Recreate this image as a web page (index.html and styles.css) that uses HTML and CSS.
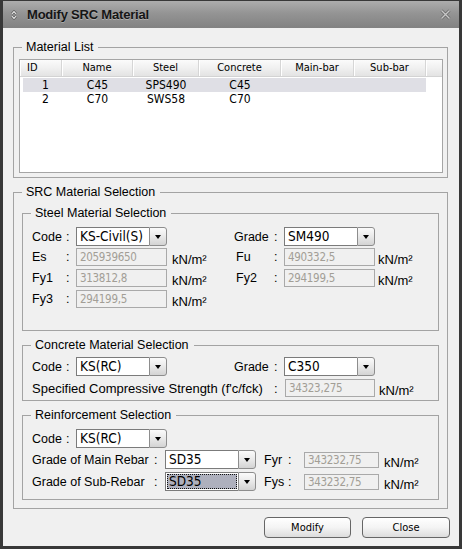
FILE: index.html
```html
<!DOCTYPE html>
<html lang="en">
<head>
    <meta charset="UTF-8">
    <title>Modify SRC Material</title>
    <link rel="stylesheet" href="styles.css">
</head>
<body>
<div class="dialog">
    <div class="titlebar">
        <svg class="titlebar__icon" width="6" height="10" viewBox="0 0 6 10">
            <path class="shade" d="M0.8 4 L3 1.6 L5.2 4 M0.8 6 L3 8.4 L5.2 6"/>
            <path class="glyph" d="M0.8 4 L3 1.6 L5.2 4 M0.8 6 L3 8.4 L5.2 6"/>
        </svg>
        <span class="titlebar__text">Modify SRC Material</span>
        <svg class="titlebar__close" width="11" height="11" viewBox="0 0 11 11">
            <path class="shade" d="M1.5 1.5 L9.5 9.5 M9.5 1.5 L1.5 9.5"/>
            <path class="glyph" d="M1.5 1.5 L9.5 9.5 M9.5 1.5 L1.5 9.5"/>
        </svg>
    </div>

    <div class="client">
        <!-- material list -->
        <fieldset class="group group--list">
            <legend>Material List</legend>
            <div class="listview">
                <div class="listview__head">
                    <span class="col col--id">ID</span>
                    <span class="col col--name">Name</span>
                    <span class="col col--steel">Steel</span>
                    <span class="col col--conc">Concrete</span>
                    <span class="col col--main">Main-bar</span>
                    <span class="col col--sub">Sub-bar</span>
                    <span class="col col--rest"></span>
                </div>
                <div class="listview__rows">
                    <div class="listview__row is-selected">
                        <span class="col col--id">1</span>
                        <span class="col col--name">C45</span>
                        <span class="col col--steel">SPS490</span>
                        <span class="col col--conc">C45</span>
                        <span class="col col--main"></span>
                        <span class="col col--sub"></span>
                    </div>
                    <div class="listview__row">
                        <span class="col col--id">2</span>
                        <span class="col col--name">C70</span>
                        <span class="col col--steel">SWS58</span>
                        <span class="col col--conc">C70</span>
                        <span class="col col--main"></span>
                        <span class="col col--sub"></span>
                    </div>
                </div>
            </div>
        </fieldset>

        <!-- SRC selection -->
        <fieldset class="group group--src">
            <legend>SRC Material Selection</legend>

            <fieldset class="group group--sub group--steel">
                <legend>Steel Material Selection</legend>
                <div class="frow">
                    <span class="lbl lbl--a"><span class="lbl__name">Code</span>:</span>
                    <span class="combo"><span class="combo__field">KS-Civil(S)</span><span class="combo__btn"></span></span>
                    <span class="spacer-a"></span>
                    <span class="lbl lbl--b"><span class="lbl__name">Grade</span>:</span>
                    <span class="combo"><span class="combo__field">SM490</span><span class="combo__btn"></span></span>
                </div>
                <div class="frow frow--tight">
                    <span class="lbl lbl--a"><span class="lbl__name">Es</span>:</span>
                    <span class="edit">205939650</span>
                    <span class="unit unit--a">kN/m²</span>
                    <span class="lbl lbl--b"><span class="lbl__name lbl__name--in">Fu</span>:</span>
                    <span class="edit">490332,5</span>
                    <span class="unit unit--b">kN/m²</span>
                </div>
                <div class="frow">
                    <span class="lbl lbl--a"><span class="lbl__name">Fy1</span>:</span>
                    <span class="edit">313812,8</span>
                    <span class="unit unit--a">kN/m²</span>
                    <span class="lbl lbl--b"><span class="lbl__name lbl__name--in">Fy2</span>:</span>
                    <span class="edit">294199,5</span>
                    <span class="unit unit--b">kN/m²</span>
                </div>
                <div class="frow">
                    <span class="lbl lbl--a"><span class="lbl__name">Fy3</span>:</span>
                    <span class="edit">294199,5</span>
                    <span class="unit unit--a">kN/m²</span>
                </div>
            </fieldset>

            <fieldset class="group group--sub group--concrete">
                <legend>Concrete Material Selection</legend>
                <div class="frow">
                    <span class="lbl lbl--a"><span class="lbl__name">Code</span>:</span>
                    <span class="combo"><span class="combo__field">KS(RC)</span><span class="combo__btn"></span></span>
                    <span class="spacer-a"></span>
                    <span class="lbl lbl--b"><span class="lbl__name">Grade</span>:</span>
                    <span class="combo"><span class="combo__field">C350</span><span class="combo__btn"></span></span>
                </div>
                <div class="frow">
                    <span class="lbl lbl--spec"><span class="lbl__name">Specified Compressive Strength (f'c/fck)</span>:</span>
                    <span class="edit edit--spec">34323,275</span>
                    <span class="unit unit--c">kN/m²</span>
                </div>
            </fieldset>

            <fieldset class="group group--sub group--rebar">
                <legend>Reinforcement Selection</legend>
                <div class="frow">
                    <span class="lbl lbl--a"><span class="lbl__name">Code</span>:</span>
                    <span class="combo"><span class="combo__field">KS(RC)</span><span class="combo__btn"></span></span>
                </div>
                <div class="frow frow--tight">
                    <span class="lbl lbl--rebar"><span class="lbl__name">Grade of Main Rebar</span>:</span>
                    <span class="combo"><span class="combo__field">SD35</span><span class="combo__btn"></span></span>
                    <span class="lbl lbl--f"><span class="lbl__name">Fyr</span>:</span>
                    <span class="edit edit--sm">343232,75</span>
                    <span class="unit unit--d">kN/m²</span>
                </div>
                <div class="frow">
                    <span class="lbl lbl--rebar"><span class="lbl__name">Grade of Sub-Rebar</span>:</span>
                    <span class="combo"><span class="combo__field combo__field--focus"><span class="sel">SD35</span></span><span class="combo__btn"></span></span>
                    <span class="lbl lbl--f"><span class="lbl__name">Fys</span>:</span>
                    <span class="edit edit--sm">343232,75</span>
                    <span class="unit unit--d">kN/m²</span>
                </div>
            </fieldset>
        </fieldset>

        <div class="actions">
            <button class="btn">Modify</button>
            <button class="btn btn--close">Close</button>
        </div>
    </div>
</div>
</body>
</html>
```

FILE: styles.css
```css
*, *::before, *::after { box-sizing: border-box; }

html, body { margin: 0; padding: 0; }
body {
  width: 462px;
  height: 549px;
  overflow: hidden;
  background: #f0f0f0;
  font-family: "Liberation Sans", Arial, sans-serif;
  font-size: 12.5px;
  color: #000;
}

.dialog {
  width: 462px;
  height: 549px;
  border: 3px solid #383838;
  border-top-width: 1px;
  background: #f0f0f0;
}

/* title bar */
.titlebar {
  height: 27px;
  display: flex;
  align-items: center;
  padding: 0 10px 0 8px;
  background: linear-gradient(#adadad, #949494 45%, #828282);
}
.titlebar__icon { flex: none; margin-right: 10px; }
.titlebar__text {
  flex: 1;
  font-size: 13px;
  font-weight: bold;
  letter-spacing: -0.2px;
  color: #151515;
  text-shadow: 0 1px 0 rgba(255,255,255,0.3);
}
.titlebar__close { flex: none; margin-right: -2px; }
.titlebar svg path { fill: none; }
.titlebar__icon .shade { stroke: #5a5a5a; stroke-width: 2.4; }
.titlebar__icon .glyph { stroke: #f2f2f2; stroke-width: 1.1; }
.titlebar__close .shade { stroke: #656565; stroke-width: 2.8; }
.titlebar__close .glyph { stroke: #c8c8c8; stroke-width: 1.4; }

.client { padding: 12px 11px 0 10px; }

/* group boxes */
.group {
  margin: 0;
  min-width: 0;
  padding: 5px 4px 4px 5px;
  border: 1px solid #a3a3a3;
}
.group > legend {
  margin-left: 3px;
  padding: 0 5px 0 4px;
  font-size: 12.5px;
  line-height: 14px;
}
.group--src { margin-top: 7px; padding: 7px 8px 8px 8px; }
.group--src > legend { margin-left: 0; }
.group--sub > legend { margin-left: -1px; }
.group--steel { padding: 7px 9px 22px 9px; }
.group--concrete { margin-top: 7px; padding: 5px 9px 3px 9px; }
.group--rebar { margin-top: 7px; padding: 7px 9px 8px 9px; }

/* list view */
.listview {
  height: 114px;
  border: 1px solid #a5a5a5;
  background: #fff;
  font-family: "DejaVu Sans Condensed", "Liberation Sans", sans-serif;
}
.listview__head {
  display: flex;
  height: 17px;
  font-size: 11px;
  line-height: 16px;
  background: linear-gradient(#fbfbfb, #f0f0f0 50%, #e3e3e3);
  border-bottom: 1px solid #d3d3d3;
}
.col { flex: none; text-align: center; white-space: nowrap; }
.listview__head .col {
  border-right: 1px solid #d6d6d6;
  box-shadow: inset 1px 0 0 #fff;
}
.listview__head .col--id { text-align: left; padding-left: 7px; }
.col--id { width: 42px; }
.col--name { width: 71px; }
.col--steel { width: 66px; }
.col--conc { width: 82px; }
.col--main { width: 73px; }
.col--sub { width: 72px; }
.listview__head .col--rest { flex: 1; border-right: 0; }

.listview__rows { padding-top: 1px; }
.listview__row {
  display: flex;
  width: 403px;
  height: 14px;
  margin-left: 3px;
  font-size: 12px;
  line-height: 14px;
}
.listview__row .col--id { width: 39px; padding-left: 6px; }
.listview__row.is-selected { background: #dfdfe5; }

/* form rows */
.frow { display: flex; align-items: center; }
.frow + .frow { margin-top: 3px; }
.frow.frow--tight { margin-top: 2px; }

.lbl { flex: none; display: flex; white-space: nowrap; }
.lbl__name { flex: none; }
.lbl--a { width: 44px; }
.lbl--a .lbl__name { width: 34px; }
.lbl--b { width: 50px; }
.lbl--b .lbl__name { width: 40px; }
.lbl__name--in { padding-left: 2px; }
.lbl--spec { width: 253px; font-size: 13px; }
.lbl--spec .lbl__name { width: 242px; }
.lbl--rebar { width: 133px; }
.lbl--rebar .lbl__name { width: 122px; }
.lbl--f { width: 40px; margin-left: 8px; }
.lbl--f .lbl__name { width: 24px; }

.spacer-a { flex: none; width: 67px; }

.unit { flex: none; align-self: flex-end; font-size: 13px; line-height: 13px; }
.unit--a { width: 62px; margin-left: 5px; }
.unit--b { margin-left: 3px; }
.unit--c { margin-left: 4px; }
.unit--d { margin-left: 5px; }

/* combo box */
.combo { flex: none; display: flex; width: 91px; height: 19px; }
.combo__field {
  flex: 1;
  overflow: hidden;
  padding-left: 3px;
  background: #fff;
  border: 1px solid #7b7b7b;
  border-right: 0;
  font-family: "DejaVu Sans Condensed", "Liberation Sans", sans-serif;
  font-size: 13.5px;
  line-height: 17px;
  white-space: nowrap;
}
.combo__field--focus { padding: 1px; }
.combo__field--focus .sel {
  display: block;
  height: 100%;
  padding-left: 2px;
  line-height: 15px;
  background: #aeb0bd;
  outline: 1px dotted #111;
  outline-offset: -1px;
}
.combo__btn {
  flex: none;
  width: 18px;
  display: flex;
  align-items: center;
  justify-content: center;
  border: 1px solid #8d8d8d;
  border-radius: 0 3px 3px 0;
  background: linear-gradient(#fbfbfb, #e9e9e9 50%, #d3d3d3);
}
.combo__btn::after {
  content: "";
  border-left: 3.5px solid transparent;
  border-right: 3.5px solid transparent;
  border-top: 4px solid #000;
  margin-top: 1px;
}

/* read-only edit */
.edit {
  flex: none;
  width: 91px;
  height: 18px;
  padding-left: 3px;
  border: 1px solid #a9a9a9;
  background: #f0f0f0;
  color: #a29e96;
  font-family: "DejaVu Sans Condensed", "Liberation Sans", sans-serif;
  font-size: 11.5px;
  letter-spacing: -0.3px;
  line-height: 16px;
  white-space: nowrap;
}
.edit--spec { width: 90px; }
.edit--sm { width: 75px; height: 16px; line-height: 14px; }

/* buttons */
.actions {
  display: flex;
  justify-content: flex-end;
  gap: 11px;
  margin-top: 8px;
  margin-right: -2px;
}
.btn {
  width: 87px;
  height: 21px;
  padding: 0;
  border: 1px solid #666;
  border-radius: 4px;
  background: linear-gradient(#ffffff, #f4f4f4 50%, #dcdcdc);
  color: #000;
  font-family: "DejaVu Sans Condensed", "Liberation Sans", sans-serif;
  font-size: 11px;
  line-height: 19px;
  text-align: center;
}
.btn--close { width: 88px; }
```
